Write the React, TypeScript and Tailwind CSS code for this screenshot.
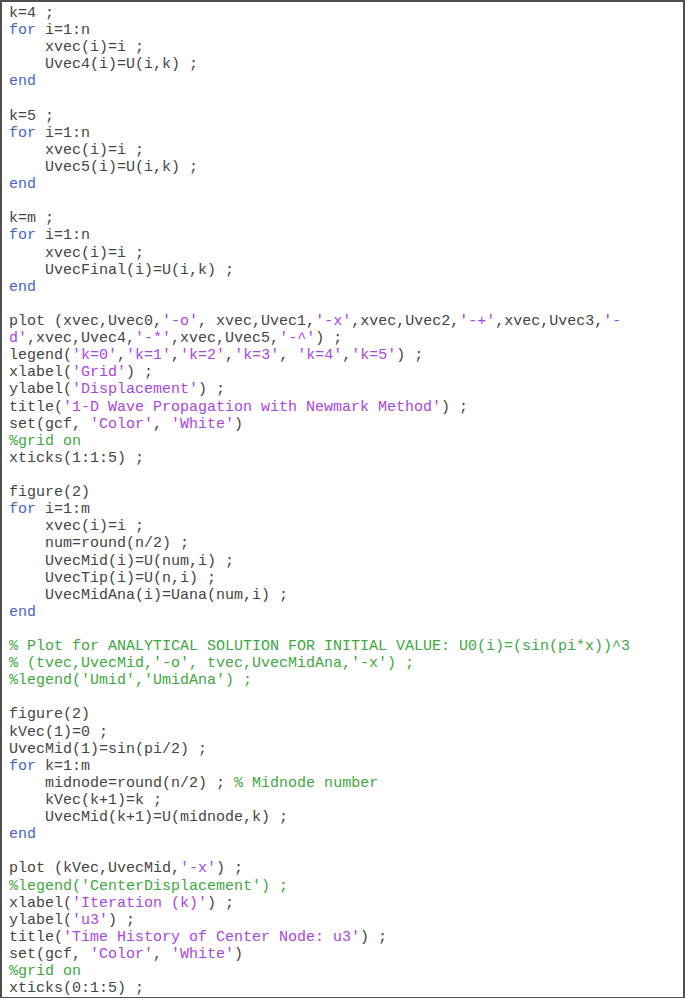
const code = `k=4 ;
for i=1:n
    xvec(i)=i ;
    Uvec4(i)=U(i,k) ;
end

k=5 ;
for i=1:n
    xvec(i)=i ;
    Uvec5(i)=U(i,k) ;
end

k=m ;
for i=1:n
    xvec(i)=i ;
    UvecFinal(i)=U(i,k) ;
end

plot (xvec,Uvec0,'-o', xvec,Uvec1,'-x',xvec,Uvec2,'-+',xvec,Uvec3,'-
d',xvec,Uvec4,'-*',xvec,Uvec5,'-^') ;
legend('k=0','k=1','k=2','k=3', 'k=4','k=5') ;
xlabel('Grid') ;
ylabel('Displacement') ;
title('1-D Wave Propagation with Newmark Method') ;
set(gcf, 'Color', 'White')
%grid on
xticks(1:1:5) ;

figure(2)
for i=1:m
    xvec(i)=i ;
    num=round(n/2) ;
    UvecMid(i)=U(num,i) ;
    UvecTip(i)=U(n,i) ;
    UvecMidAna(i)=Uana(num,i) ;
end

% Plot for ANALYTICAL SOLUTION FOR INITIAL VALUE: U0(i)=(sin(pi*x))^3
% (tvec,UvecMid,'-o', tvec,UvecMidAna,'-x') ;
%legend('Umid','UmidAna') ;

figure(2)
kVec(1)=0 ;
UvecMid(1)=sin(pi/2) ;
for k=1:m
    midnode=round(n/2) ; % Midnode number
    kVec(k+1)=k ;
    UvecMid(k+1)=U(midnode,k) ;
end

plot (kVec,UvecMid,'-x') ;
%legend('CenterDisplacement') ;
xlabel('Iteration (k)') ;
ylabel('u3') ;
title('Time History of Center Node: u3') ;
set(gcf, 'Color', 'White')
%grid on
xticks(0:1:5) ;`;

type Seg = { t: string; c: string };

const KW = new Set(['for', 'end']);

// tiny MATLAB highlighter; string state carries over line breaks
function tokenize(src: string): Seg[][] {
  const out: Seg[][] = [];
  let inStr = false;
  for (const line of src.split('\n')) {
    const segs: Seg[] = [];
    let buf = '';
    let kind = inStr ? 'str' : 'txt';
    const flush = () => {
      if (!buf) return;
      if (kind === 'txt') {
        buf.split(/(\b[a-z]+\b)/).forEach((p) => {
          if (p) segs.push({ t: p, c: KW.has(p) ? 'kw' : 'txt' });
        });
      } else segs.push({ t: buf, c: kind });
      buf = '';
    };
    for (let i = 0; i < line.length; i++) {
      const ch = line[i];
      if (!inStr && ch === '%') {
        flush();
        kind = 'cmt';
        buf = line.slice(i);
        break;
      }
      if (ch === "'") {
        if (inStr) {
          buf += ch;
          flush();
          inStr = false;
          kind = 'txt';
        } else {
          flush();
          inStr = true;
          kind = 'str';
          buf = ch;
        }
        continue;
      }
      buf += ch;
    }
    flush();
    out.push(segs);
  }
  return out;
}

const colors: Record<string, string> = {
  txt: 'text-[#444444]',
  kw: 'text-[#4565cc]',
  str: 'text-[#a846e0]',
  cmt: 'text-[#40a840]',
};

export default function App() {
  const lines = tokenize(code);
  return (
    <div className="w-[685px] h-[1002px] bg-white">
      <div className="w-[685px] h-[998px] border-2 border-b border-[#505050] pl-[7px] pt-[3px] overflow-hidden">
        <pre
          className="text-[15px] leading-[17.12px] m-0"
          style={{ fontFamily: '"Liberation Mono", "Courier New", monospace' }}
        >
          {lines.map((segs, i) => (
            <div key={i} className="h-[17.12px] whitespace-pre">
              {segs.map((s, j) => (
                <span key={j} className={colors[s.c]}>
                  {s.t}
                </span>
              ))}
            </div>
          ))}
        </pre>
      </div>
    </div>
  );
}
